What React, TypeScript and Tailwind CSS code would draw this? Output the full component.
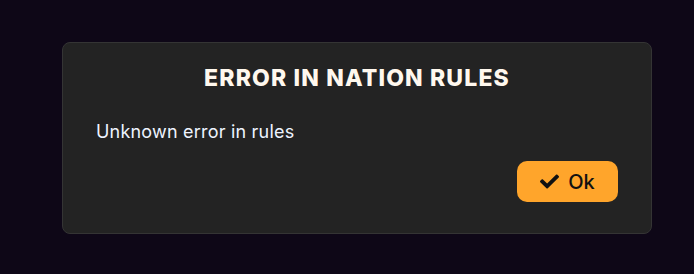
import React from "react";
import { FaCheck } from "react-icons/fa";

export default function App() {
  return (
    <div
      className="w-[694px] h-[274px] bg-[#0e0717] pt-[42px] pl-[62px]"
      style={{ fontFamily: "Inter, 'Noto Sans', sans-serif" }}
    >
      <div className="w-[590px] h-[192px] rounded-[8px] border border-[#343434] bg-[#232323] px-[33px] pt-[21px] flex flex-col">
        <h2 className="text-center text-[23px] leading-[28px] font-extrabold tracking-[1.15px] text-[#fff8ee]">
          ERROR IN NATION RULES
        </h2>
        <p className="mt-[28px] text-[18px] leading-[24px] tracking-[0.2px] text-[#eef4ff]">
          Unknown error in rules
        </p>
        <div className="mt-[17px] flex justify-end">
          <button className="h-[41px] w-[101px] rounded-[10px] bg-[#ffa52b] flex items-center justify-center gap-[9px] text-[#111] text-[20px] font-medium">
            <FaCheck className="w-[19px] h-[19px]" />
            <span>Ok</span>
          </button>
        </div>
      </div>
    </div>
  );
}
